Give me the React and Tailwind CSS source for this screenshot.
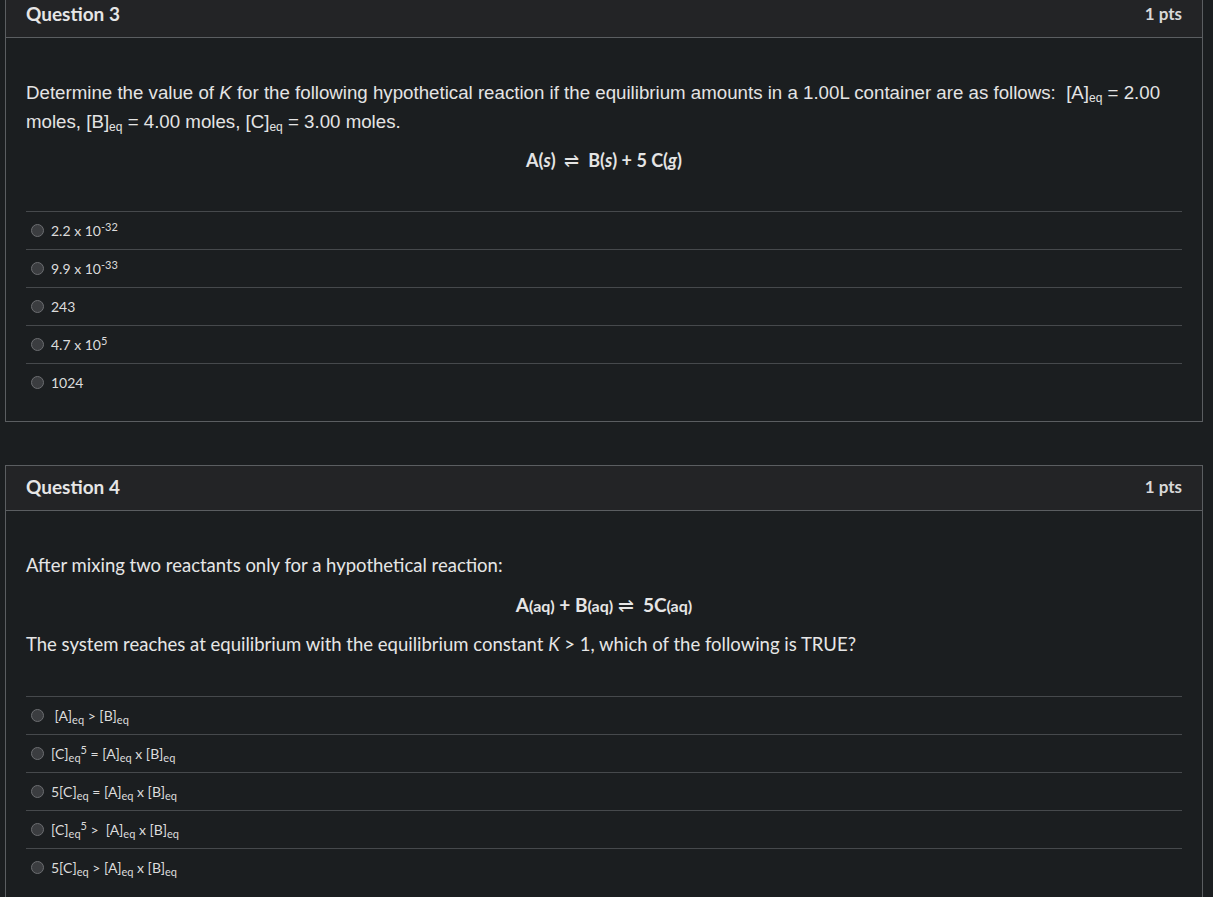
import React from 'react';

const lato = { fontFamily: 'Lato, "Open Sans", sans-serif' };

// small shifted scripts, kept out of the line box so rows stay even
const Sub = ({ children, size = 'text-[11px]' }) => <span className={`${size} leading-none relative top-[3px]`}>{children}</span>;
const Sup = ({ children }) => <span className="text-[11px] leading-none relative -top-[5px]">{children}</span>;

const Radio = () => (
  <span className="inline-block w-[13px] h-[13px] rounded-full bg-[#3b3d40] border border-[#6c6e71] shrink-0" />
);

const AnswerList = ({ answers }) => (
  <div className="mt-[37px]">
    {answers.map((a, i) => (
      <div key={i} className="h-[38px] border-t border-[#46494c] flex items-center pl-[5px] gap-[7px]">
        <Radio />
        <span className="text-[14px] text-[#dcdcdc] leading-none whitespace-pre" style={lato}>{a}</span>
      </div>
    ))}
  </div>
);

const Card = ({ title, children, className = '' }) => (
  <div className={`ml-[5px] mr-[10px] border border-[#5b5e61] bg-[#1b1e20] ${className}`}>
    <div className="h-[45px] bg-[#232426] border-b border-[#5b5e61] flex items-center justify-between px-[20px]" style={lato}>
      <span className="text-[19px] font-bold text-[#e6e6e6] -mt-[2px]">{title}</span>
      <span className="text-[17px] font-bold text-[#d8d8d8] -mt-[2px]">1 pts</span>
    </div>
    <div className="px-[20px] pt-[40px] pb-[20px]">{children}</div>
  </div>
);

export default function App() {
  const q3 = [
    <>2.2 x 10<Sup>-32</Sup></>,
    <>9.9 x 10<Sup>-33</Sup></>,
    <>243</>,
    <>4.7 x 10<Sup>5</Sup></>,
    <>1024</>,
  ];
  const q4 = [
    <> [A]<Sub>eq</Sub> &gt; [B]<Sub>eq</Sub></>,
    <>[C]<Sub>eq</Sub><Sup>5</Sup> = [A]<Sub>eq</Sub> x [B]<Sub>eq</Sub></>,
    <>5[C]<Sub>eq</Sub> = [A]<Sub>eq</Sub> x [B]<Sub>eq</Sub></>,
    <>[C]<Sub>eq</Sub><Sup>5</Sup> &gt;  [A]<Sub>eq</Sub> x [B]<Sub>eq</Sub></>,
    <>5[C]<Sub>eq</Sub> &gt; [A]<Sub>eq</Sub> x [B]<Sub>eq</Sub></>,
  ];

  return (
    <div className="min-h-screen bg-[#1b1e20] overflow-hidden">
      <Card title="Question 3" className="-mt-[8px]">
        <p className="text-[18.7px] leading-[29px] text-[#e4e4e4]" style={{ fontFamily: '"Liberation Sans", Arial, sans-serif' }}>
          Determine the value of <i>K</i> for the following hypothetical reaction if the equilibrium amounts in a 1.00L container are as follows:&nbsp; [A]<Sub size="text-[12px]">eq</Sub> = 2.00 moles, [B]<Sub size="text-[12px]">eq</Sub> = 4.00 moles, [C]<Sub size="text-[12px]">eq</Sub> = 3.00 moles.
        </p>
        <p className="mt-[10px] text-center text-[18px] leading-[28px] font-bold text-[#e4e4e4]" style={lato}>
          A(<i>s</i>)&nbsp; <span className="font-normal">⇌</span>&nbsp; B(<i>s</i>) + 5 C(<i>g</i>)
        </p>
        <AnswerList answers={q3} />
      </Card>

      <div className="h-[43px]" />

      <Card title="Question 4">
        <div style={lato} className="text-[#e6e6e6]">
          <p className="text-[18.5px] leading-[29px]">After mixing two reactants only for a hypothetical reaction:</p>
          <p className="mt-[11px] text-center text-[19px] leading-[28px] font-bold">
            A<span className="text-[16px]">(aq)</span> + B<span className="text-[16px]">(aq)</span> <span className="font-normal">⇌</span>&nbsp; 5C<span className="text-[16px]">(aq)</span>
          </p>
          <p className="mt-[10px] text-[18.5px] leading-[29px]">The system reaches at equilibrium with the equilibrium constant <i>K</i> &gt; 1, which of the following is TRUE?</p>
        </div>
        <AnswerList answers={q4} />
      </Card>
    </div>
  );
}
